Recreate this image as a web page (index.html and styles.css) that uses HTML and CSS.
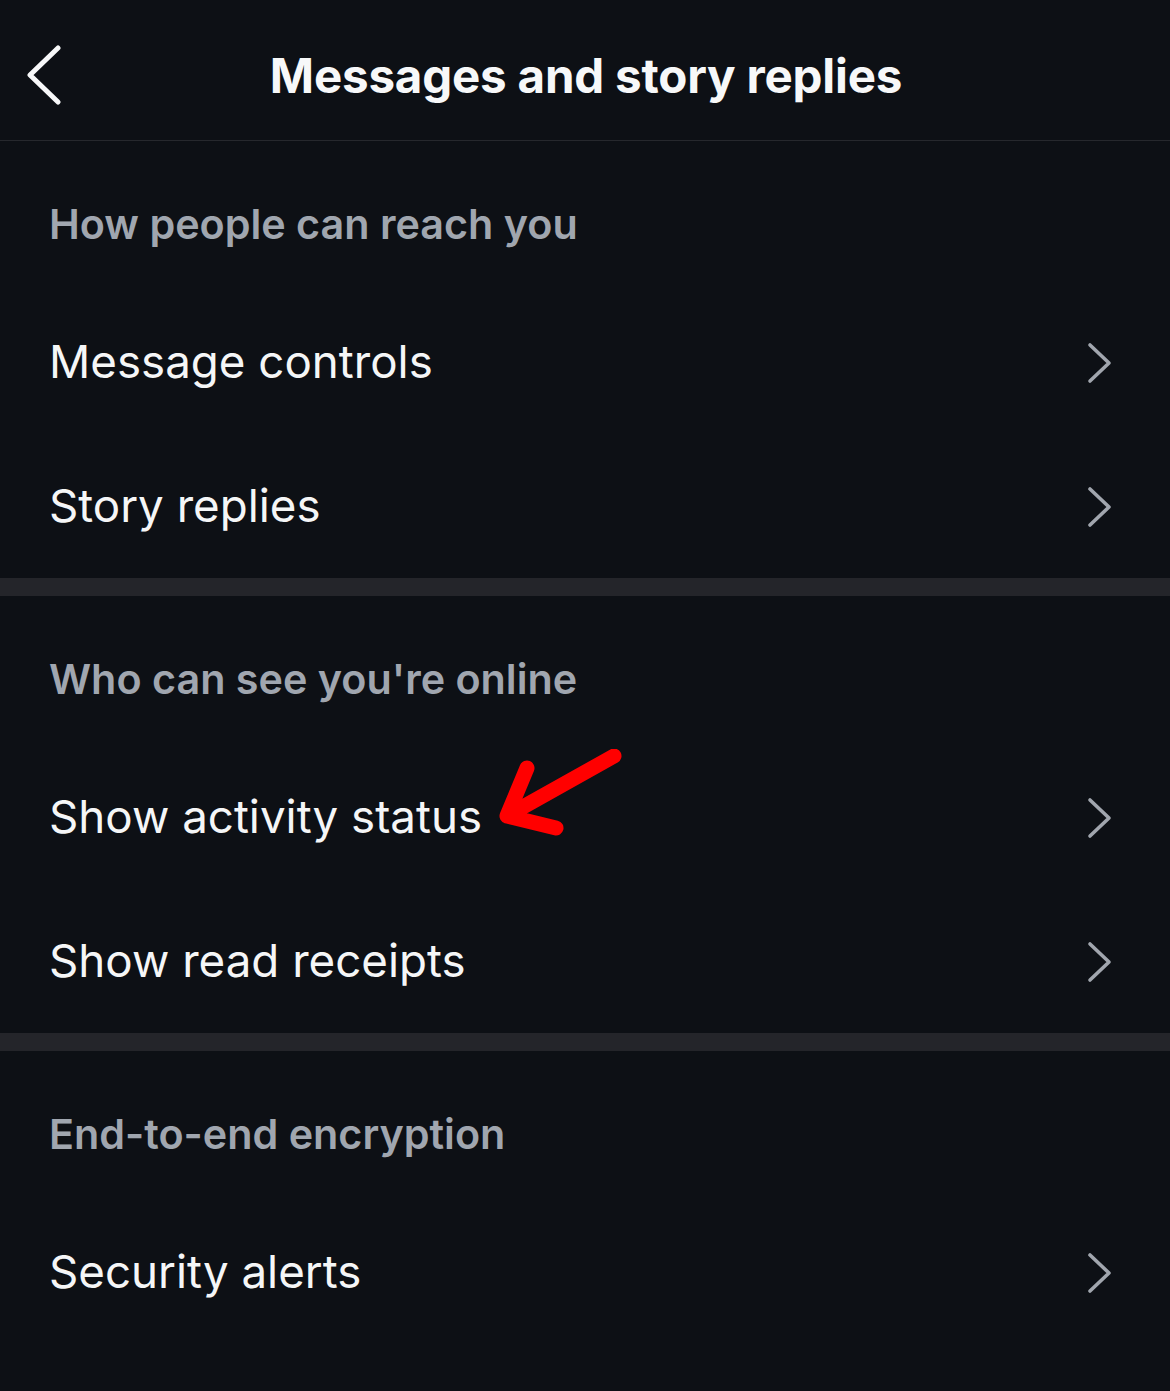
FILE: index.html
```html
<!DOCTYPE html>
<html lang="en">
<head>
    <meta charset="UTF-8">
    <meta name="viewport" content="width=device-width, initial-scale=1.0">
    <title>Messages and story replies</title>
    <link rel="stylesheet" href="styles.css">
</head>
<body>
    <header class="top-bar">
        <button class="back-btn" aria-label="Back">
            <svg width="40" height="60" viewBox="0 0 40 60">
                <path d="M32 7 L4 34 L32 61" transform="translate(0,-4)" fill="none" stroke="#f7f8f9" stroke-width="5" stroke-linecap="round" stroke-linejoin="round"/>
            </svg>
        </button>
        <h1>Messages and story replies</h1>
    </header>

    <main>
        <!-- Nhóm 1 -->
        <section class="group">
            <h2 class="group-title">How people can reach you</h2>
            <a class="row" href="#">
                <span>Message controls</span>
                <svg class="chev" width="30" height="44" viewBox="0 0 30 44"><path d="M5 4 L24 22 L5 40" fill="none" stroke="#a1a6ae" stroke-width="3.6" stroke-linecap="round" stroke-linejoin="round"/></svg>
            </a>
            <a class="row" href="#">
                <span>Story replies</span>
                <svg class="chev" width="30" height="44" viewBox="0 0 30 44"><path d="M5 4 L24 22 L5 40" fill="none" stroke="#a1a6ae" stroke-width="3.6" stroke-linecap="round" stroke-linejoin="round"/></svg>
            </a>
        </section>

        <div class="divider"></div>

        <!-- Nhóm 2 -->
        <section class="group">
            <h2 class="group-title">Who can see you're online</h2>
            <a class="row" href="#">
                <span class="mark">Show activity status
                    <svg class="red-arrow" width="130" height="90" viewBox="0 0 130 90">
                        <path d="M117 7 L10 67 M30 19 L10 67 L59 79" fill="none" stroke="#ff0000" stroke-width="15" stroke-linecap="round" stroke-linejoin="round"/>
                    </svg>
                </span>
                <svg class="chev" width="30" height="44" viewBox="0 0 30 44"><path d="M5 4 L24 22 L5 40" fill="none" stroke="#a1a6ae" stroke-width="3.6" stroke-linecap="round" stroke-linejoin="round"/></svg>
            </a>
            <a class="row" href="#">
                <span>Show read receipts</span>
                <svg class="chev" width="30" height="44" viewBox="0 0 30 44"><path d="M5 4 L24 22 L5 40" fill="none" stroke="#a1a6ae" stroke-width="3.6" stroke-linecap="round" stroke-linejoin="round"/></svg>
            </a>
        </section>

        <div class="divider"></div>

        <!-- Nhóm 3 -->
        <section class="group">
            <h2 class="group-title">End-to-end encryption</h2>
            <a class="row" href="#">
                <span>Security alerts</span>
                <svg class="chev" width="30" height="44" viewBox="0 0 30 44"><path d="M5 4 L24 22 L5 40" fill="none" stroke="#a1a6ae" stroke-width="3.6" stroke-linecap="round" stroke-linejoin="round"/></svg>
            </a>
        </section>
    </main>
</body>
</html>
```

FILE: styles.css
```css
/* Kiểu chung */
body {
    font-family: 'Inter', 'Noto Sans', sans-serif;
    background-color: #0d1015;
    color: #f5f6f7;
    margin: 0;
    padding: 0;
}

/* Thanh tiêu đề */
.top-bar {
    height: 140px;
    border-bottom: 1px solid #26282d;
    display: flex;
    align-items: center;
    justify-content: center;
    position: relative;
}

.top-bar h1 {
    margin: 0;
    font-size: 47.5px;
    font-weight: 700;
    letter-spacing: -0.2px;
    color: #f7f8f9;
    padding-left: 2px;
    margin-top: 10px;
}

.back-btn {
    position: absolute;
    left: 26px;
    top: 45px;
    background: none;
    border: none;
    padding: 0;
    cursor: pointer;
}

.back-btn svg {
    display: block;
}

.group-title {
    margin: 0;
    height: 149px;
    box-sizing: border-box;
    padding: 59px 49px 0;
    line-height: 48px;
    font-size: 41.3px;
    font-weight: 600;
    color: #a0a6af;
}

.row {
    height: 144px;
    display: flex;
    align-items: center;
    justify-content: space-between;
    padding: 0 55px 0 49px;
    color: #f5f6f7;
    text-decoration: none;
    font-size: 45.7px;
    font-weight: 400;
}

.row span {
    line-height: 56px;
}

.chev {
    display: block;
    margin-top: 2px;
}

.mark {
    position: relative;
}

/* Mũi tên đỏ chỉ vào mục */
.red-arrow {
    position: absolute;
    left: 100%;
    top: -40px;
    margin-left: 15px;
}

.divider {
    height: 18px;
    background-color: #24252a;
}
```
